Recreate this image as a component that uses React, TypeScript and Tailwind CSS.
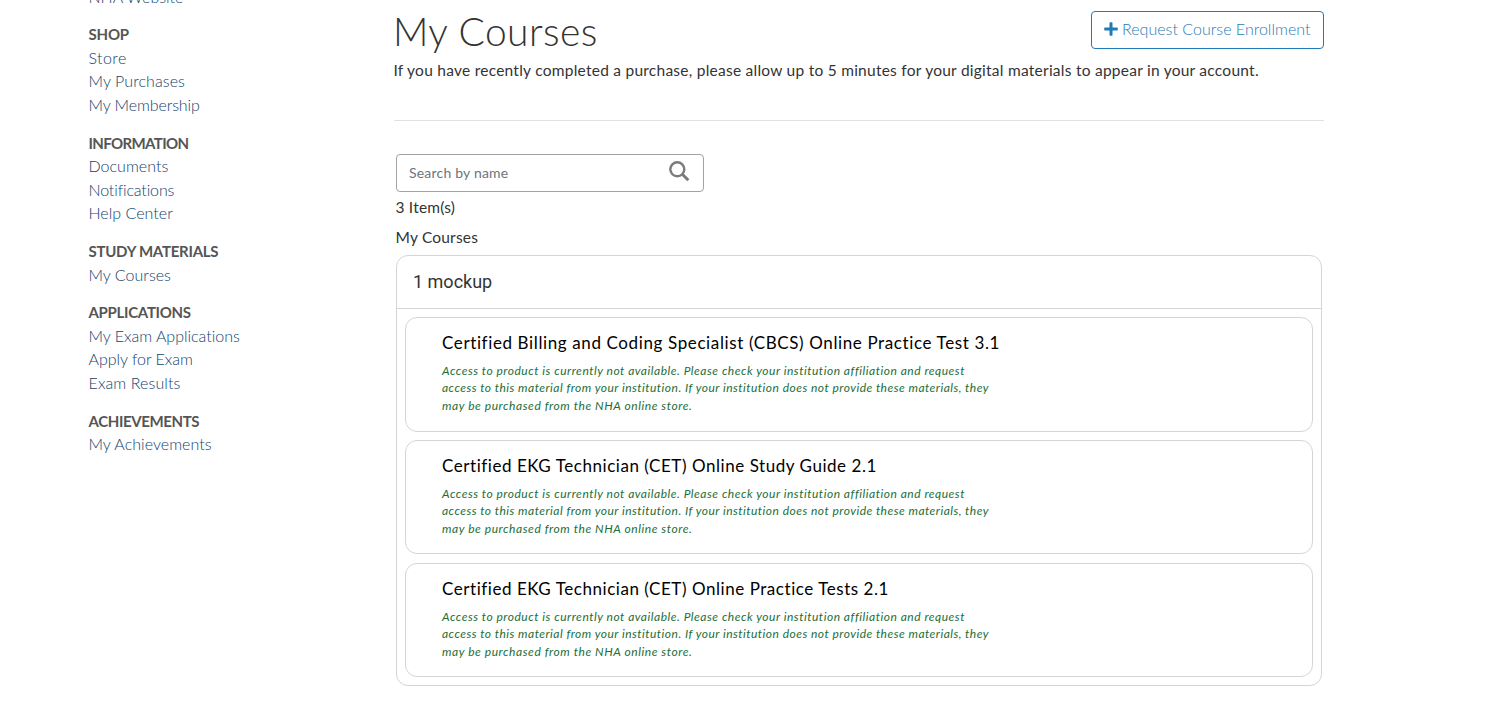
import React from "react";

type NavItem = {
	label: string;
	className: string;
};

type NavGroup = NavItem & {
	links: NavItem[];
};

const groups: NavGroup[] = [
	{
		label: "SHOP",
		className: "tracking-[-0.2px]",
		links: [
			{ label: "Store", className: "tracking-[0.4px]" },
			{ label: "My Purchases", className: "tracking-[0.08px]" },
			{ label: "My Membership", className: "tracking-[-0.1px]" },
		],
	},
	{
		label: "INFORMATION",
		className: "tracking-[-0.63px]",
		links: [
			{ label: "Documents", className: "tracking-[0.03px]" },
			{ label: "Notifications", className: "tracking-[-0.13px]" },
			{ label: "Help Center", className: "tracking-[0.03px]" },
		],
	},
	{
		label: "STUDY MATERIALS",
		className: "tracking-[-0.25px]",
		links: [{ label: "My Courses", className: "tracking-[0.02px]" }],
	},
	{
		label: "APPLICATIONS",
		className: "tracking-[-0.3px]",
		links: [
			{ label: "My Exam Applications", className: "tracking-[-0.01px]" },
			{ label: "Apply for Exam", className: "tracking-[-0.03px]" },
			{ label: "Exam Results", className: "tracking-[0.1px]" },
		],
	},
	{
		label: "ACHIEVEMENTS",
		className: "tracking-[-0.38px]",
		links: [{ label: "My Achievements", className: "tracking-[0.03px]" }],
	},
];

const courses = [
	{
		title: "Certified Billing and Coding Specialist (CBCS) Online Practice Test 3.1",
		className: "tracking-[0.62px]",
	},
	{
		title: "Certified EKG Technician (CET) Online Study Guide 2.1",
		className: "tracking-[0.55px]",
	},
	{
		title: "Certified EKG Technician (CET) Online Practice Tests 2.1",
		className: "tracking-[0.55px]",
	},
];

const notice = [
	{
		text: "Access to product is currently not available. Please check your institution affiliation and request",
		className: "tracking-[0.52px]",
	},
	{
		text: "access to this material from your institution. If your institution does not provide these materials, they",
		className: "tracking-[0.48px]",
	},
	{
		text: "may be purchased from the NHA online store.",
		className: "tracking-[0.57px]",
	},
];

const Sidebar = () => {
	return (
		<nav className="-mt-[15.4px] w-[305px] shrink-0 pl-[88.5px] text-[16px] leading-[23.6px] font-light text-[#12426d]">
			<a className="block">NHA Website</a>
			{groups.map((group) => (
				<div key={group.label} className="pt-[14px]">
					<h2
						className={`relative top-px text-[15px] leading-[23.6px] font-bold text-[#555] ${group.className}`}
					>
						{group.label}
					</h2>
					{group.links.map((link) => (
						<a key={link.label} className={`block ${link.className}`}>
							{link.label}
						</a>
					))}
				</div>
			))}
		</nav>
	);
};

const CourseCard = ({ title, className }: { title: string; className: string }) => {
	return (
		<div className="h-[114.6px] rounded-xl border border-[#d5d5d5] px-9 pt-[12.4px]">
			<h3 className={`text-[17px] leading-[26px] text-black ${className}`}>{title}</h3>
			<div className="mt-[5.5px] text-[12px] leading-[17.6px] whitespace-nowrap text-[#1b6e38] italic">
				{notice.map((line) => (
					<p key={line.text} className={line.className}>
						{line.text}
					</p>
				))}
			</div>
		</div>
	);
};

const App = () => {
	return (
		<div className="flex h-[726px] w-[1499px] overflow-hidden bg-white font-[Lato,sans-serif] text-[#333]">
			<Sidebar />
			<main className="ml-[89px] w-[930px]">
				<header className="h-[121px] border-b border-[#dee2e6]">
					<div className="flex items-start justify-between">
						<h1 className="-ml-px pt-[6px] text-[39px] leading-[50px] font-light tracking-[0.45px]">
							My Courses
						</h1>
						<button className="mt-[11px] flex h-[38px] w-[233px] items-center rounded border border-[#1f7bb6] pl-3 text-[16px] font-light whitespace-nowrap text-[#1f7bb6]">
							<svg
								viewBox="0 0 14 14"
								className="mr-1 mb-0.5 h-[14px] w-[14px] shrink-0"
								fill="currentColor"
							>
								<path d="M5.5 1a.8.8 0 0 1 .8-.8h1.4a.8.8 0 0 1 .8.8v4.5H13a.8.8 0 0 1 .8.8v1.4a.8.8 0 0 1-.8.8H8.5V13a.8.8 0 0 1-.8.8H6.3a.8.8 0 0 1-.8-.8V8.500H1a.8.8 0 0 1-.8-.8V6.300a.8.8 0 0 1 .8-.8h4.500z" />
							</svg>
							<span className="mb-0.5 tracking-[0.02px]">Request Course Enrollment</span>
						</button>
					</div>
					<p className="mt-[2px] -ml-[0.5px] text-[15.5px] leading-6 tracking-[0.25px] whitespace-nowrap">
						If you have recently completed a purchase, please allow up to 5 minutes for your digital
						materials to appear in your account.
					</p>
				</header>

				<section className="ml-0.5 w-[926px] pt-[33px]">
					<div className="flex h-[38px] w-[308px] items-center justify-between rounded border border-[#a3a3a3] pr-[13px] pl-3">
						<span className="mb-0.5 text-[14px] tracking-[0.2px] text-[#6c757d]">
							Search by name
						</span>
						<svg viewBox="0 0 22 22" className="-mt-1 h-[22px] w-[22px]" fill="none" stroke="#7b7b7b">
							<circle cx="9.3" cy="9.3" r="7" strokeWidth="2.4" />
							<path d="M14.3 14.3L20.3 20.3" strokeWidth="3" />
						</svg>
					</div>
					<div className="-ml-[0.5px] flex flex-col gap-1.5 pt-[3px] text-[15.5px] leading-6 tracking-[0.2px]">
						<p>3 Item(s)</p>
						<p>My Courses</p>
					</div>

					<div className="mt-[6px] h-[431px] rounded-xl border border-[#d5d5d5]">
						<h2 className="h-[53px] border-b border-[#d5d5d5] pl-4 font-[Roboto,sans-serif] text-[18px] leading-[52px]">
							1 mockup
						</h2>
						<div className="flex flex-col gap-[8.3px] p-2">
							{courses.map((course) => (
								<CourseCard key={course.title} {...course} />
							))}
						</div>
					</div>
				</section>
			</main>
		</div>
	);
};

export default App;
